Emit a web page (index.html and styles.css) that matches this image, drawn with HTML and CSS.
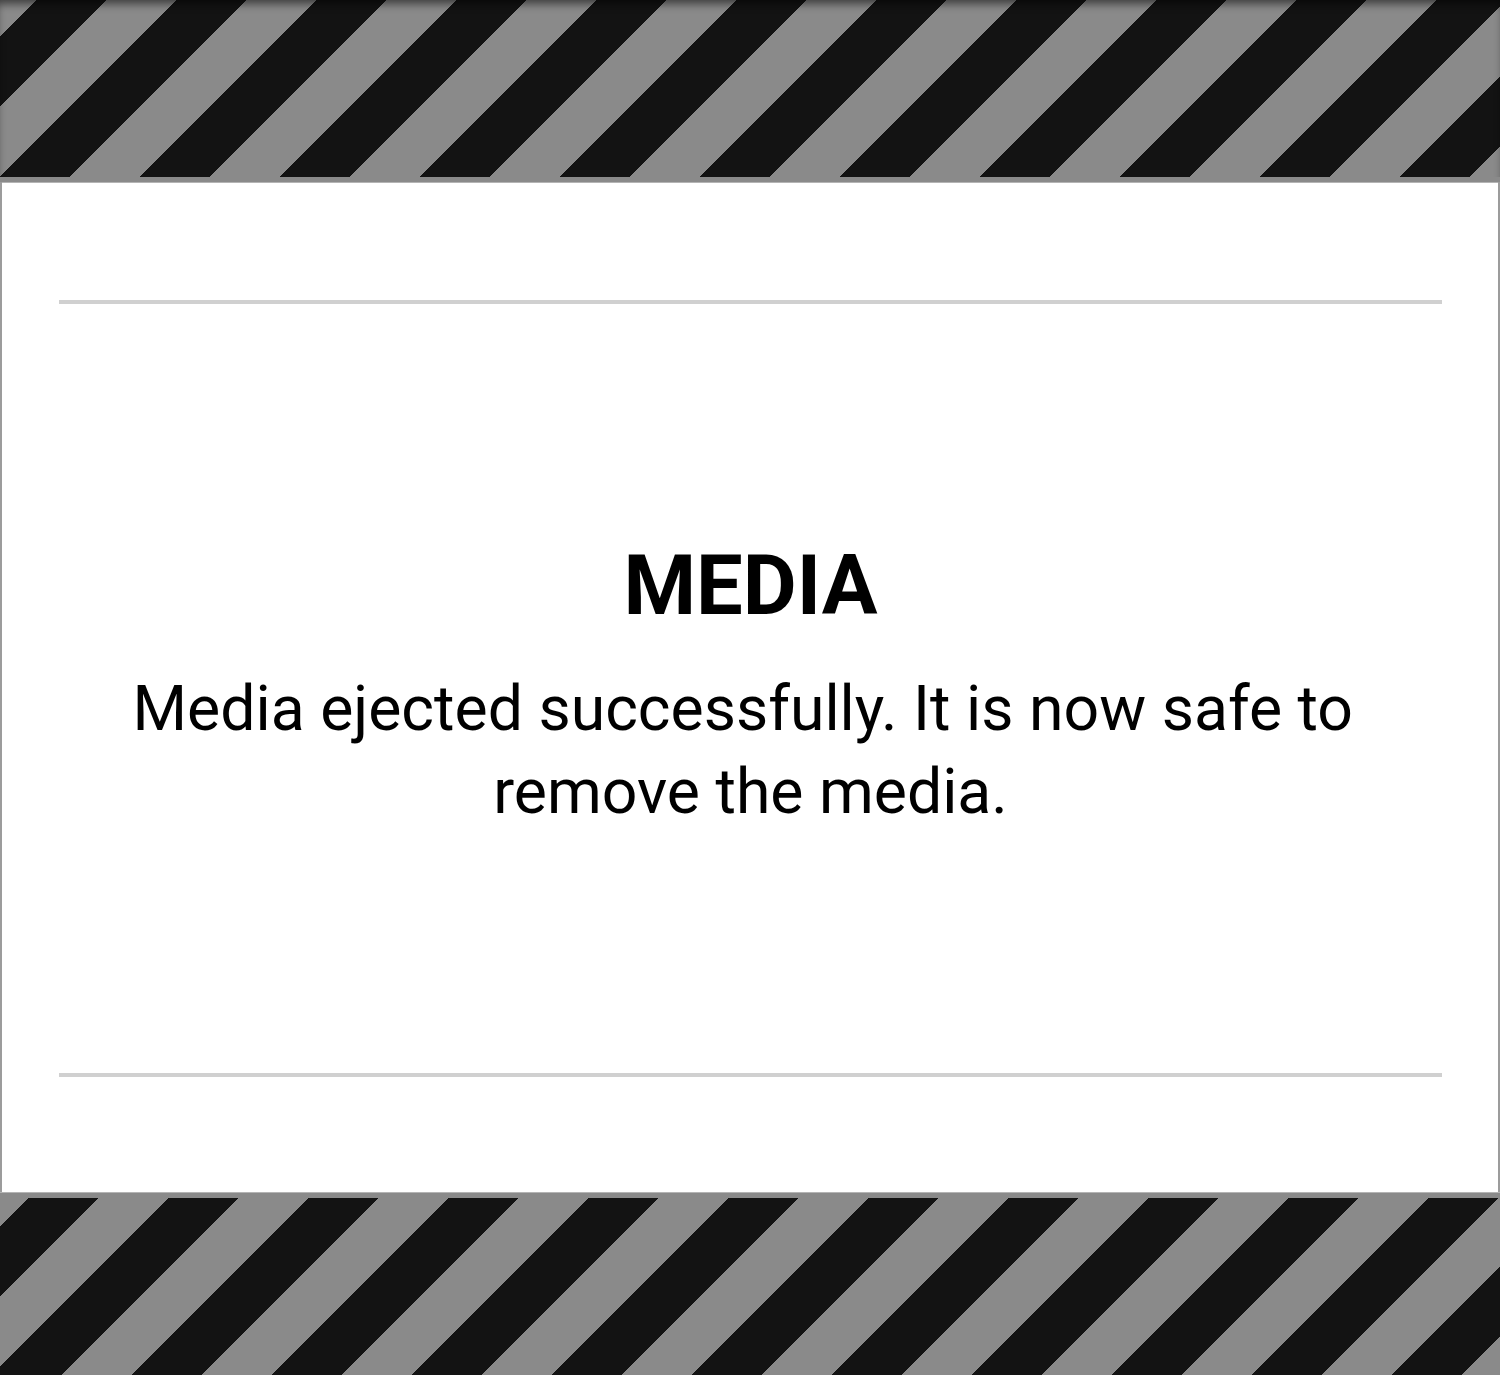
FILE: index.html
```html
<!DOCTYPE html>
<html lang="en">
<head>
  <meta charset="UTF-8" />
  <meta name="viewport" content="width=device-width, initial-scale=1" />
  <title>Media</title>
  <link rel="stylesheet" href="styles.css">
</head>
<body>
  <div class="hazard hazard-top"></div>

  <main class="panel">
    <hr class="rule">
    <div class="message">
      <h1>MEDIA</h1>
      <p>Media ejected successfully. It is now safe to remove the media.</p>
    </div>
    <hr class="rule">
  </main>

  <div class="hazard hazard-bottom"></div>
</body>
</html>
```

FILE: styles.css
```css
:root {
  --stripe-dark: #131313;
  --stripe-light: #8a8a8a;
  --rule: #d0d0d0;
  --edge: #9c9c9c;
}

* {
  box-sizing: border-box;
  margin: 0;
  padding: 0;
}

body {
  font-family: Roboto, 'Liberation Sans', sans-serif;
  background: #ffffff;
  color: #000000;
}

/* Warning stripes above and below the panel */
.hazard {
  height: 182px;
  background-color: var(--stripe-light);
  background-image: linear-gradient(135deg,
    var(--stripe-dark) 0 25%,
    var(--stripe-light) 25% 50%,
    var(--stripe-dark) 50% 75%,
    var(--stripe-light) 75% 100%);
  background-size: 140px 140px;
  background-repeat: repeat;
}

.hazard-top {
  background-position: 36px 0;
  border-bottom: 5px solid var(--stripe-light);
  box-shadow: inset 0 7px 8px -3px rgba(0, 0, 0, 0.55), 0 1px 0 #b4b4b4;
}

.hazard-bottom {
  background-position: 28px 0;
  border-top: 5px solid var(--stripe-light);
  box-shadow: 0 -1px 0 #b4b4b4;
}

.panel {
  height: 1011px;
  border-left: 2px solid var(--edge);
  border-right: 2px solid var(--edge);
  padding: 118px 56px 116px 57px;
  display: flex;
  flex-direction: column;
}

.rule {
  border: none;
  height: 4px;
  background: var(--rule);
}

.message {
  flex: 1;
  display: flex;
  flex-direction: column;
  align-items: center;
  justify-content: center;
  text-align: center;
  padding: 0 60px;
}

.message h1 {
  font-size: 83px;
  font-weight: 700;
  line-height: 1;
  margin-bottom: 40px;
}

/* keep the space at the end of a wrapped line, it shifts the centring */
.message p {
  font-size: 62.5px;
  font-weight: 400;
  line-height: 83px;
  white-space: break-spaces;
}
```
